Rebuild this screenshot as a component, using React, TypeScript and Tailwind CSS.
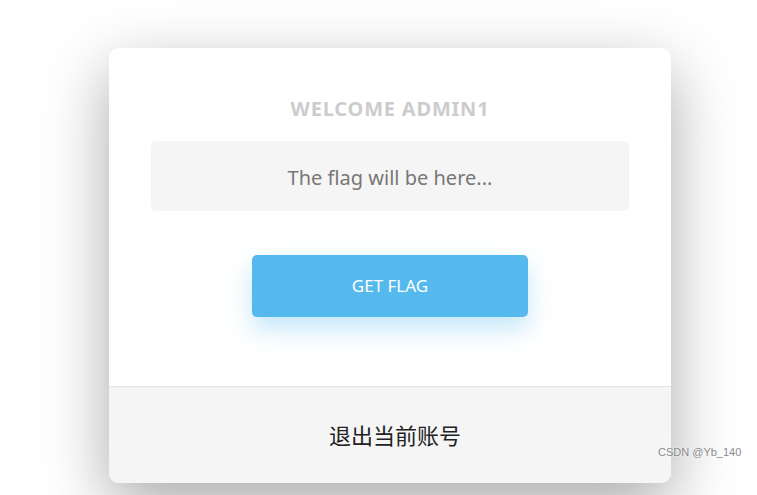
export default function App() {
  return (
    <div className="relative min-h-[495px] w-[757px] overflow-hidden bg-white font-['Noto_Sans','Noto_Sans_CJK_SC',sans-serif]">
      <div className="pt-[48px] pl-[109px]">
        <div className="w-[562px] overflow-hidden rounded-[10px] bg-white shadow-[0_22px_65px_rgba(0,0,0,0.34)]">
          <div className="flex flex-col items-center px-[42px] pt-[48px] pb-[69px]">
            <h1 className="text-[20px] font-bold leading-[26px] tracking-[0.8px] text-[#cccccc]">WELCOME ADMIN1</h1>
            <div className="mt-[19px] flex h-[70px] w-full items-center justify-center rounded-[5px] bg-[#f5f5f5] pt-[3px] text-[20px] text-[#777777]">
              The flag will be here...
            </div>
            <button className="mt-[44px] h-[62px] w-[276px] rounded-[5px] bg-[#56b9ed] text-[17px] text-white shadow-[0_12px_24px_rgba(86,185,237,0.35)]">
              GET FLAG
            </button>
          </div>
          <div className="flex h-[97px] items-center justify-center border-t border-[#dfe5ea] bg-[#f5f5f5] pl-[10px] pt-[1px] text-[22px] text-[#222222]">
            退出当前账号
          </div>
        </div>
      </div>
      <div className="absolute left-[658px] top-[444px] text-[11px] text-[#8a8a8a] font-['Liberation_Sans',sans-serif] [text-shadow:0_0_2px_#fff]">
        CSDN @Yb_140
      </div>
    </div>
  );
}
